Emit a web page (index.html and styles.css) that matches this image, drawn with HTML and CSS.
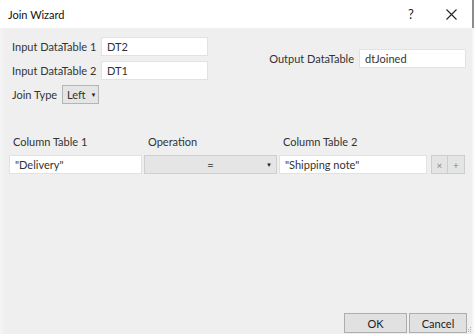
FILE: index.html
```html
<!DOCTYPE html>
<html>
<head>
  <title>Join Wizard</title>
  <link rel="stylesheet" href="styles.css">
</head>
<body>
  <div class="window">
    <div class="titlebar">
      <span class="title">Join Wizard</span>
      <span class="title-btn help">?</span>
      <span class="title-btn close">
        <svg width="11" height="11" viewBox="0 0 11 11">
          <path d="M0.5 0.5 L10.5 10.5 M10.5 0.5 L0.5 10.5" stroke="#222" stroke-width="1.1" fill="none"/>
        </svg>
      </span>
    </div>
    <div class="content">
      <div class="top">
        <div class="inputs">
          <div class="row">
            <label class="lbl">Input DataTable 1</label>
            <div class="field in-field">DT2</div>
          </div>
          <div class="row">
            <label class="lbl">Input DataTable 2</label>
            <div class="field in-field">DT1</div>
          </div>
          <div class="row">
            <label class="lbl-join">Join Type</label>
            <div class="combo join-combo">Left <span class="arrow">&#9660;</span></div>
          </div>
        </div>
        <div class="output">
          <label class="lbl-out">Output DataTable</label>
          <div class="field out-field">dtJoined</div>
        </div>
      </div>

      <div class="cols">
        <div class="col-head c1">Column Table 1</div>
        <div class="col-head c2">Operation</div>
        <div class="col-head c3">Column Table 2</div>
        <div></div>
        <div class="field c1">"Delivery"</div>
        <div class="combo op-combo"><span class="op">=</span><span class="arrow">&#9660;</span></div>
        <div class="field c3">"Shipping note"</div>
        <div class="row-btns">
          <span class="small-btn">&#215;</span>
          <span class="small-btn">+</span>
        </div>
      </div>

      <div class="spacer"></div>

      <div class="footer">
        <button class="btn">OK</button>
        <button class="btn cancel">Cancel</button>
      </div>
      <svg class="grip" width="7" height="7" viewBox="0 0 7 7">
        <rect x="5" y="1" width="1" height="1" fill="#b0b0b0"/>
        <rect x="3" y="3" width="1" height="1" fill="#b0b0b0"/>
        <rect x="5" y="3" width="1" height="1" fill="#b0b0b0"/>
        <rect x="1" y="5" width="1" height="1" fill="#b0b0b0"/>
        <rect x="3" y="5" width="1" height="1" fill="#b0b0b0"/>
        <rect x="5" y="5" width="1" height="1" fill="#b0b0b0"/>
      </svg>
    </div>
  </div>
</body>
</html>
```

FILE: styles.css
```css
html, body {
  margin: 0;
  padding: 0;
}
body {
  width: 474px;
  height: 334px;
  overflow: hidden;
  font-family: Lato, "Noto Sans", Arial, sans-serif;
  font-size: 11px;
  color: #333;
}
.window {
  height: 334px;
  display: flex;
  flex-direction: column;
}
.titlebar {
  height: 28px;
  flex: none;
  background-color: #fff;
  display: flex;
  align-items: center;
  padding-left: 8px;
  border-right: 2px solid #8c8c8c;
  color: #111;
  font-size: 11px;
}
.title {
  flex: 1;
}
.title-btn {
  width: 40px;
  text-align: center;
  font-size: 13px;
  color: #222;
}
.close {
  display: flex;
  justify-content: center;
  margin-right: 1px;
}
.content {
  position: relative;
  flex: 1;
  background-color: #efefef;
  border-left: 3px solid #f3f3f3;
  border-right: 2px solid #f6f6f6;
  display: flex;
  flex-direction: column;
  padding: 9px 6px 1px 6px;
}
.top {
  display: flex;
  justify-content: space-between;
}
.inputs {
  display: flex;
  flex-direction: column;
  gap: 5px;
}
.row {
  display: flex;
  align-items: center;
  height: 19px;
}
label {
  white-space: nowrap;
  flex: none;
}
.lbl {
  width: 89px;
  padding-left: 3px;
}
.lbl-join {
  width: 50px;
  padding-left: 3px;
}
.lbl-out {
  margin-right: 5px;
}
.field {
  box-sizing: border-box;
  height: 19px;
  background-color: #fff;
  border: 1px solid #e2e2e2;
  padding: 0 5px;
  display: flex;
  align-items: center;
  white-space: nowrap;
}
.in-field {
  width: 107px;
}
.output {
  display: flex;
  align-items: center;
  margin-top: 12px;
  align-self: flex-start;
}
.out-field {
  width: 107px;
}
.combo {
  box-sizing: border-box;
  height: 19px;
  background-color: #e5e5e5;
  border: 1px solid #b4b4b4;
  display: flex;
  align-items: center;
}
.join-combo {
  width: 37px;
  padding-left: 4px;
  gap: 5px;
}
.arrow {
  font-size: 6px;
  color: #222;
}
.cols {
  display: grid;
  grid-template-columns: 133px 133px 148px auto;
  column-gap: 2px;
  margin-top: 31px;
}
.col-head {
  padding-left: 4px;
  height: 20px;
}
.op-combo {
  justify-content: flex-end;
  padding-right: 4px;
  border-color: #cfcfcf;
}
.op {
  flex: 1;
  text-align: center;
  color: #555;
  padding-left: 10px;
}
.row-btns {
  display: flex;
  height: 19px;
  padding-left: 2px;
}
.small-btn {
  box-sizing: border-box;
  width: 17px;
  height: 19px;
  background-color: #e4e4e4;
  border: 1px solid #cdcdcd;
  display: flex;
  align-items: center;
  justify-content: center;
  color: #888;
  font-size: 10px;
}
.small-btn + .small-btn {
  border-left: none;
}
.spacer {
  flex: 1;
}
.footer {
  display: flex;
  justify-content: flex-end;
  gap: 2px;
  margin-right: -1px;
}
.btn {
  box-sizing: border-box;
  width: 63px;
  height: 20px;
  background-color: #e1e1e1;
  border: 1px solid #adadad;
  font-family: Lato, "Noto Sans", Arial, sans-serif;
  font-size: 11px;
  color: #222;
  padding: 0;
}
.cancel {
  width: 58px;
}
.grip {
  position: absolute;
  right: 0;
  bottom: 1px;
}
```
